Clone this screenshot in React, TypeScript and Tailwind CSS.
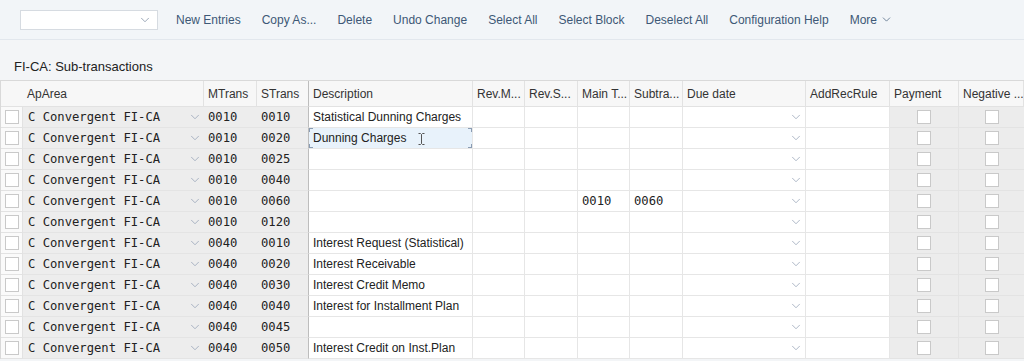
import { ChevronDown } from "lucide-react";

const cols =
  "grid grid-cols-[22px_181px_53px_52px_164px_52px_53px_52px_53px_123px_84px_69px_65px]";

const actions = [
  "New Entries",
  "Copy As...",
  "Delete",
  "Undo Change",
  "Select All",
  "Select Block",
  "Deselect All",
  "Configuration Help",
];

const headers = [
  "",
  "ApArea",
  "MTrans",
  "STrans",
  "Description",
  "Rev.M...",
  "Rev.S...",
  "Main T...",
  "Subtra...",
  "Due date",
  "AddRecRule",
  "Payment",
  "Negative ...",
];

interface Row {
  m: string;
  s: string;
  desc: string;
  main?: string;
  sub?: string;
}

const rows: Row[] = [
  { m: "0010", s: "0010", desc: "Statistical Dunning Charges" },
  { m: "0010", s: "0020", desc: "Dunning Charges" },
  { m: "0010", s: "0025", desc: "" },
  { m: "0010", s: "0040", desc: "" },
  { m: "0010", s: "0060", desc: "", main: "0010", sub: "0060" },
  { m: "0010", s: "0120", desc: "" },
  { m: "0040", s: "0010", desc: "Interest Request (Statistical)" },
  { m: "0040", s: "0020", desc: "Interest Receivable" },
  { m: "0040", s: "0030", desc: "Interest Credit Memo" },
  { m: "0040", s: "0040", desc: "Interest for Installment Plan" },
  { m: "0040", s: "0045", desc: "" },
  { m: "0040", s: "0050", desc: "Interest Credit on Inst.Plan" },
];

const mono = "font-['DejaVu_Sans_Mono',monospace] text-[12.2px] text-[#222]";

function Box() {
  return <div className="h-[14px] w-[14px] border border-[#c9c9c9] bg-white" />;
}

function Chevron() {
  return <ChevronDown className="h-[14px] w-[14px] text-[#8c9bb0]" strokeWidth={1.2} />;
}

function DataRow({ row, index }: { row: Row; index: number }) {
  const selected = index === 1;
  return (
    <div className={`${cols} h-[21px] text-[12px] text-[#222]`}>
      <div className="flex items-center justify-center border-b border-r border-[#e2e2e2] bg-[#fafafa]">
        <Box />
      </div>
      <div className="flex items-center justify-between border-b border-[#e4e4e4] bg-[#ededed] pl-[5px] pr-[2px]">
        <span className={mono}>C Convergent FI-CA</span>
        <Chevron />
      </div>
      <div className="flex items-center border-b border-[#e4e4e4] bg-[#ededed] pl-[4px]">
        <span className={mono}>{row.m}</span>
      </div>
      <div className="flex items-center border-b border-r border-b-[#e4e4e4] border-r-[#bdbdbd] bg-[#ededed] pl-[4px]">
        <span className={mono}>{row.s}</span>
      </div>
      <div
        className={`relative flex items-center border-b border-r border-[#e6e6e6] pl-[4px] ${
          selected ? "bg-[#e8f2fb]" : "bg-white"
        }`}
      >
        {row.desc}
        {selected && (
          <>
            <span className="absolute left-0 top-0 h-[4px] w-[4px] border-l border-t border-[#8a9cb3]" />
            <span className="absolute right-0 top-0 h-[4px] w-[4px] border-r border-t border-[#8a9cb3]" />
            <span className="absolute bottom-0 left-0 h-[4px] w-[4px] border-b border-l border-[#8a9cb3]" />
            <span className="absolute bottom-0 right-0 h-[4px] w-[4px] border-b border-r border-[#8a9cb3]" />
            <svg
              className="absolute left-[109px] top-[5px]"
              width="7"
              height="12"
              viewBox="0 0 7 12"
              fill="none"
              stroke="#555"
              strokeWidth="1"
            >
              <path d="M0.5 0.5h2l1 1 1-1h2M3.5 1.5v9M0.5 11.5h2l1-1 1 1h2" />
            </svg>
          </>
        )}
      </div>
      <div className="border-b border-r border-[#e6e6e6] bg-white" />
      <div className="border-b border-r border-[#e6e6e6] bg-white" />
      <div className="flex items-center border-b border-r border-[#e6e6e6] bg-white pl-[4px]">
        <span className={mono}>{row.main}</span>
      </div>
      <div className="flex items-center border-b border-r border-[#e6e6e6] bg-white pl-[4px]">
        <span className={mono}>{row.sub}</span>
      </div>
      <div className="flex items-center justify-end border-b border-r border-[#e6e6e6] bg-white pr-[2px]">
        <Chevron />
      </div>
      <div className="border-b border-r border-[#e6e6e6] bg-white" />
      <div className="flex items-center justify-center border-b border-r border-[#e3e3e3] bg-[#ececec]">
        <Box />
      </div>
      <div className="flex items-center justify-center border-b border-[#e3e3e3] bg-[#ececec]">
        <Box />
      </div>
    </div>
  );
}

export default function App() {
  return (
    <div className="h-[361px] w-[1024px] overflow-hidden bg-[#f3f5f7] font-['Liberation_Sans',Arial,sans-serif]">
      {/* Toolbar */}
      <div className="flex h-[40px] items-center border-b border-[#e2e7ed] bg-[#f2f5f8] pl-[20px] text-[12px] text-[#3d5876]">
        <div className="mr-[18px] flex h-[20px] w-[138px] items-center justify-end border border-[#d6dbe1] bg-white pr-[5px]">
          <ChevronDown className="h-[14px] w-[14px] text-[#7d8ea3]" strokeWidth={1.3} />
        </div>
        <div className="flex items-center gap-[21px]">
          {actions.map((a) => (
            <span key={a}>{a}</span>
          ))}
          <span className="flex items-center gap-[3px]">
            More
            <ChevronDown className="h-[13px] w-[13px]" strokeWidth={1.3} />
          </span>
        </div>
      </div>

      {/* Title */}
      <div className="pl-[14px] pt-[19px] text-[13px] leading-[16px] text-[#222]">
        FI-CA: Sub-transactions
      </div>

      {/* Table */}
      <div className="mt-[5px] border-l border-t border-[#d9d9d9] bg-white">
        <div className={`${cols} h-[26px] bg-[#f7f7f7] text-[12px] text-[#333]`}>
          {headers.map((h, i) => (
            <div
              key={i}
              className={`flex items-center overflow-hidden whitespace-nowrap border-b border-[#e2e2e2] pl-[4px] ${
                i === 0
                  ? ""
                  : i === 3
                  ? "border-r border-r-[#bdbdbd]"
                  : "border-r border-r-[#e2e2e2]"
              }`}
            >
              {h}
            </div>
          ))}
        </div>
        {rows.map((r, i) => (
          <DataRow key={i} row={r} index={i} />
        ))}
      </div>
    </div>
  );
}
